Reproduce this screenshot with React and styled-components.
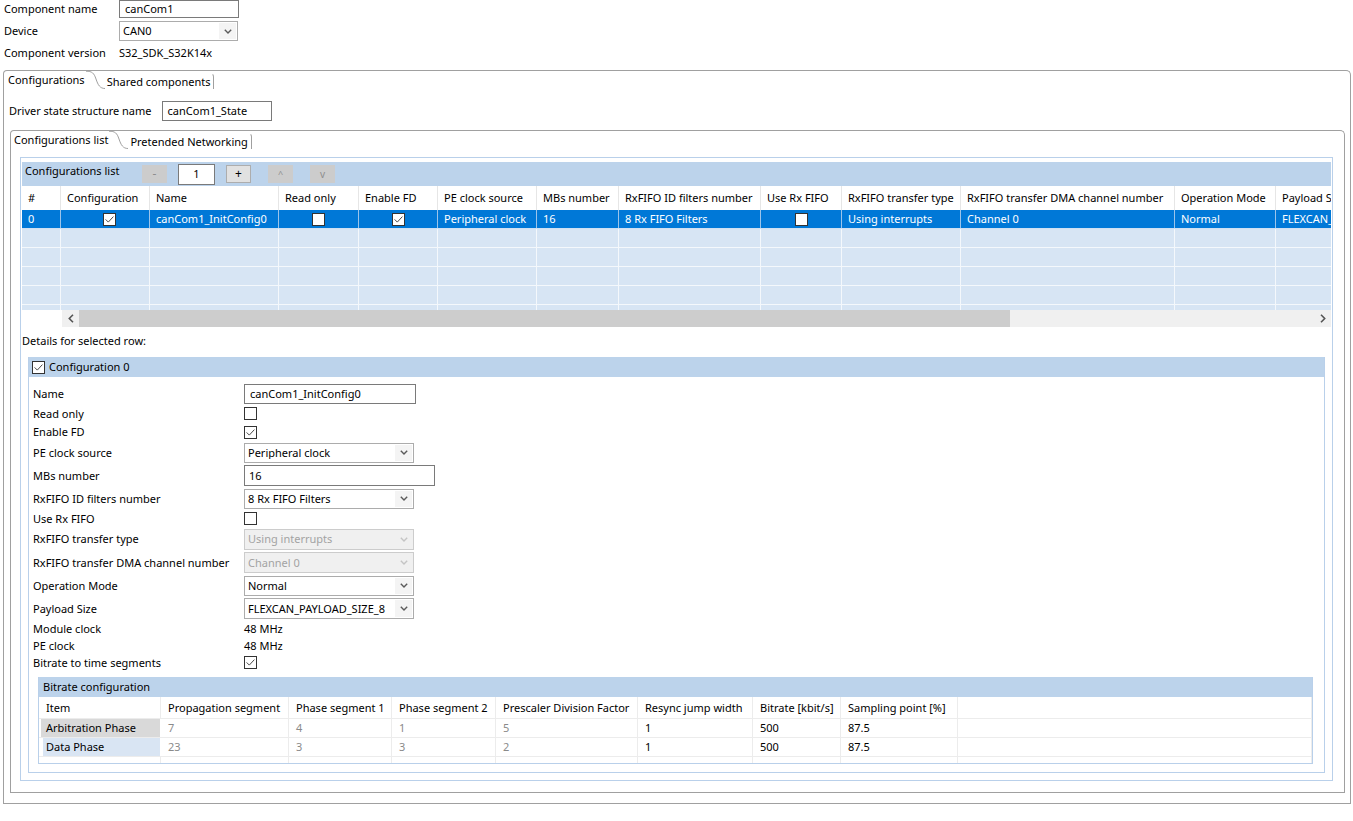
import React from 'react';
import styled, { createGlobalStyle } from 'styled-components';

const GRAY = '#a0a0a0';
const BLUE_LINE = '#b9d0ea';
const BLUE_BAND = '#bcd3eb';
const ROW_BLUE = '#d7e5f4';
const SELECT = '#0078d7';

const GlobalStyle = createGlobalStyle`
  *, *::before, *::after { box-sizing: border-box; }
  html, body { margin: 0; padding: 0; background: #fff; }
  body {
    font-family: "Noto Sans", "Open Sans", sans-serif;
    font-size: 11px;
    line-height: 1.2;
    color: #000;
  }
`;

const Page = styled.div`
  width: 1353px;
  height: 821px;
  overflow: hidden;
`;

/* ---------- top header ---------- */
const TopGrid = styled.div`
  display: grid;
  grid-template-columns: 119px 1fr;
  grid-template-rows: 18px 20px 18px;
  row-gap: 3px;
  align-items: center;
  justify-items: start;
`;

const TopLabel = styled.span`
  padding-left: 4px;
  white-space: nowrap;
`;

const Field = styled.div`
  width: ${p => p.$w}px;
  height: ${p => p.$h || 20}px;
  border: 1px solid #7a7a7a;
  background: #fff;
  display: flex;
  align-items: center;
  justify-content: ${p => (p.$center ? 'center' : 'flex-start')};
  padding-left: ${p => (p.$center ? 0 : p.$pl ?? 5)}px;
  white-space: nowrap;
  overflow: hidden;
`;

const ComboBox = styled.div`
  width: ${p => p.$w}px;
  height: ${p => p.$h || 20}px;
  border: 1px solid ${p => (p.$disabled ? '#cccccc' : '#acacac')};
  background: ${p => (p.$disabled ? '#f0f0f0' : '#fff')};
  color: ${p => (p.$disabled ? '#a3a3a3' : '#000')};
  display: flex;
  align-items: center;
`;

const ComboText = styled.span`
  flex: 1;
  padding-left: ${p => p.$pl ?? 3}px;
  white-space: nowrap;
  overflow: hidden;
`;

const ComboArrow = styled.span`
  width: 17px;
  align-self: stretch;
  margin: 1px;
  display: flex;
  align-items: center;
  justify-content: center;
  background: ${p => (p.$disabled ? '#f0f0f0' : '#f4f4f4')};
`;

const Chevron = ({ color = '#555' }) => (
  <svg width="8" height="5" viewBox="0 0 8 5">
    <path d="M0.8 0.8 L4 4 L7.2 0.8" fill="none" stroke={color} strokeWidth="1.4" />
  </svg>
);

const Combo = ({ w, h, disabled, children, pl }) => (
  <ComboBox $w={w} $h={h} $disabled={disabled}>
    <ComboText $pl={pl}>{children}</ComboText>
    <ComboArrow $disabled={disabled}>
      <Chevron color={disabled ? '#c4c4c4' : '#5a5a5a'} />
    </ComboArrow>
  </ComboBox>
);

const CheckBoxBox = styled.span`
  width: 13px;
  height: 13px;
  flex: none;
  border: 1px solid #333;
  background: #fff;
  display: inline-flex;
  align-items: center;
  justify-content: center;
`;

const Check = ({ checked }) => (
  <CheckBoxBox>
    {checked && (
      <svg width="11" height="11" viewBox="0 0 11 11">
        <path d="M1.6 5.4 L4.3 8.1 L9.4 2.6" fill="none" stroke="#4a4a4a" strokeWidth="1" />
      </svg>
    )}
  </CheckBoxBox>
);

/* ---------- tab folders ---------- */
const Folder = styled.div`
  display: flex;
  flex-direction: column;
  margin: ${p => p.$margin};
`;

const TabStrip = styled.div`
  height: 19px;
  display: flex;
  align-items: stretch;
  border: 1px solid ${GRAY};
  border-bottom: none;
  border-radius: 4px 5px 0 0;
`;

const ActiveTab = styled.div`
  display: flex;
  align-items: center;
  padding-left: ${p => p.$pl}px;
  white-space: nowrap;
`;

const TabCurve = () => (
  <svg width="19" height="18" viewBox="0 0 19 18" style={{ display: 'block', alignSelf: 'flex-start' }}>
    <path d="M0 0.2 C 6 0.2, 8 2, 10 8 C 12 14, 14 17.5, 19 17.5" fill="none" stroke={GRAY} strokeWidth="1" />
  </svg>
);

const TabLabel = styled.span`
  padding-right: 1px;
`;

const OtherTab = styled.div`
  display: flex;
  align-items: center;
  padding: 0 3px 0 2px;
  margin-top: 2px;
  border-right: 1px solid ${GRAY};
  border-top: 1px solid ${GRAY};
  border-top-right-radius: 4px;
  border-top-color: transparent;
  white-space: nowrap;
`;

const FolderBody = styled.div`
  border: 1px solid ${GRAY};
  border-top: none;
  padding: ${p => p.$pad};
`;

/* ---------- driver row ---------- */
const DriverRow = styled.div`
  display: flex;
  align-items: center;
  height: 20px;
  gap: 10px;
  padding-left: 5px;
`;

/* ---------- configurations list ---------- */
const BlueBox = styled.div`
  border: 1px solid ${BLUE_LINE};
  padding: 4px 1px 0 1px;
`;

const ListToolbar = styled.div`
  height: 24px;
  background: ${BLUE_BAND};
  display: flex;
  align-items: center;
  padding-left: 3px;
`;

const ToolbarTitle = styled.span`
  width: 117px;
  white-space: nowrap;
  margin-top: -6px;
`;

const ToolButton = styled.div`
  width: 25px;
  height: 18px;
  margin-right: ${p => p.$mr || 0}px;
  display: flex;
  align-items: center;
  justify-content: center;
  background: ${p => (p.$enabled ? '#e1e1e1' : '#cccccc')};
  border: 1px solid ${p => (p.$enabled ? '#adadad' : '#cccccc')};
  color: ${p => (p.$enabled ? '#000' : '#8e8e8e')};
  font-size: ${p => p.$fs || 11}px;
`;

const CountField = styled(Field)`
  margin-right: 11px;
  height: 21px;
`;

const mainCols = [39, 89, 129, 80, 79, 99, 82, 142, 81, 119, 214, 101, 140];
const mainTemplate = mainCols.map(w => `${w}px`).join(' ');

const TableViewport = styled.div`
  height: 124px;
  overflow: hidden;
`;

const GridRow = styled.div`
  display: grid;
  grid-template-columns: ${mainTemplate};
  height: ${p => p.$h}px;
  background: ${p => p.$bg};
  color: ${p => p.$fg || '#000'};
  border-bottom: ${p => (p.$line ? `1px solid ${p.$line}` : 'none')};
`;

const HeadCell = styled.div`
  display: flex;
  align-items: center;
  padding-left: 6px;
  border-right: 1px solid #e6e6e6;
  white-space: nowrap;
  overflow: hidden;
`;

const BodyCell = styled.div`
  display: flex;
  align-items: center;
  justify-content: ${p => (p.$center ? 'center' : 'flex-start')};
  padding-left: ${p => (p.$center ? p.$shift || 0 : 6)}px;
  border-right: 1px solid ${p => p.$sep};
  white-space: nowrap;
  overflow: hidden;
`;

const ScrollRow = styled.div`
  display: flex;
  height: 17px;
  padding-left: 40px;
`;

const ScrollBar = styled.div`
  flex: 1;
  display: flex;
  background: #f0f0f0;
`;

const ScrollArrow = styled.div`
  width: ${p => p.$w}px;
  display: flex;
  align-items: center;
  justify-content: center;
`;

const ScrollThumb = styled.div`
  width: 931px;
  background: #cdcdcd;
`;

const ScrollGap = styled.div`
  flex: 1;
`;

const DetailsCaption = styled.div`
  height: 17px;
  margin-top: 5px;
  display: flex;
  align-items: center;
  padding-left: 0;
`;

/* ---------- group boxes ---------- */
const Group = styled.div`
  border: 1px solid ${BLUE_LINE};
  border-top: none;
  margin: ${p => p.$margin};
`;

const GroupHeader = styled.div`
  height: ${p => p.$h}px;
  background: ${BLUE_BAND};
  display: flex;
  align-items: center;
  gap: 4px;
  padding-left: ${p => p.$pl}px;
`;

const GroupBody = styled.div`
  padding: ${p => p.$pad};
`;

const DetailRow = styled.div`
  display: grid;
  grid-template-columns: 211px auto;
  height: ${p => p.$h}px;
  align-items: center;
  justify-items: start;
  white-space: nowrap;
`;

/* ---------- bitrate table ---------- */
const brCols = [122, 128, 103, 104, 142, 115, 88, 117];
const brTemplate = brCols.map(w => `${w}px`).join(' ') + ' 1fr';

const BrViewport = styled.div`
  height: 66px;
  overflow: hidden;
`;

const BrRow = styled.div`
  display: grid;
  grid-template-columns: ${brTemplate};
  height: ${p => p.$h}px;
  border-bottom: 1px solid #ececec;
`;

const BrHead = styled.div`
  display: flex;
  align-items: center;
  padding-left: 7px;
  border-right: 1px solid #ececec;
  white-space: nowrap;
`;

const BrCell = styled.div`
  display: flex;
  align-items: center;
  padding-left: 7px;
  border-right: 1px solid #ececec;
  color: ${p => (p.$dim ? '#8a8a8a' : '#000')};
  white-space: nowrap;
`;

const BrItem = styled.div`
  display: flex;
  align-items: center;
  margin-left: ${p => p.$inset}px;
  margin-right: 1px;
  padding-left: ${p => 7 - p.$inset}px;
  background: ${p => p.$bg};
  white-space: nowrap;
`;

/* ---------- data ---------- */
const headers = [
  '#', 'Configuration', 'Name', 'Read only', 'Enable FD', 'PE clock source', 'MBs number',
  'RxFIFO ID filters number', 'Use Rx FIFO', 'RxFIFO transfer type',
  'RxFIFO transfer DMA channel number', 'Operation Mode', 'Payload Size',
];

const selRow = [
  { t: '0' },
  { c: true, shift: 8 },
  { t: 'canCom1_InitConfig0' },
  { c: false },
  { c: true },
  { t: 'Peripheral clock' },
  { t: '16' },
  { t: '8 Rx FIFO Filters' },
  { c: false },
  { t: 'Using interrupts' },
  { t: 'Channel 0' },
  { t: 'Normal' },
  { t: 'FLEXCAN_PAYLOAD_SIZE_8' },
];

const details = [
  { l: 'Name', h: 21, k: 'field', v: 'canCom1_InitConfig0', w: 172, ch: 20 },
  { l: 'Read only', h: 19, k: 'check', v: false },
  { l: 'Enable FD', h: 18, k: 'check', v: true },
  { l: 'PE clock source', h: 23, k: 'combo', v: 'Peripheral clock', w: 170, ch: 20 },
  { l: 'MBs number', h: 23, k: 'field', v: '16', w: 191, ch: 21, pl: 4 },
  { l: 'RxFIFO ID filters number', h: 23, k: 'combo', v: '8 Rx FIFO Filters', w: 170, ch: 20 },
  { l: 'Use Rx FIFO', h: 17, k: 'check', v: false },
  { l: 'RxFIFO transfer type', h: 24, k: 'combo', v: 'Using interrupts', w: 170, ch: 21, dis: true },
  { l: 'RxFIFO transfer DMA channel number', h: 23, k: 'combo', v: 'Channel 0', w: 170, ch: 21, dis: true },
  { l: 'Operation Mode', h: 23, k: 'combo', v: 'Normal', w: 170, ch: 20 },
  { l: 'Payload Size', h: 23, k: 'combo', v: 'FLEXCAN_PAYLOAD_SIZE_8', w: 170, ch: 21 },
  { l: 'Module clock', h: 17, k: 'text', v: '48 MHz' },
  { l: 'PE clock', h: 17, k: 'text', v: '48 MHz' },
  { l: 'Bitrate to time segments', h: 17, k: 'check', v: true },
];

const brHeaders = [
  'Item', 'Propagation segment', 'Phase segment 1', 'Phase segment 2',
  'Prescaler Division Factor', 'Resync jump width', 'Bitrate [kbit/s]', 'Sampling point [%]', '',
];

const brRows = [
  { item: 'Arbitration Phase', bg: '#d9d9d9', inset: 2, vals: ['7', '4', '1', '5', '1', '500', '87.5'] },
  { item: 'Data Phase', bg: '#d9e5f3', inset: 4, vals: ['23', '3', '3', '2', '1', '500', '87.5'] },
];

const renderControl = d => {
  if (d.k === 'field') return <Field $w={d.w} $h={d.ch} $pl={d.pl}>{d.v}</Field>;
  if (d.k === 'check') return <Check checked={d.v} />;
  if (d.k === 'combo') return <Combo w={d.w} h={d.ch} disabled={d.dis}>{d.v}</Combo>;
  return <span>{d.v}</span>;
};

export default function App() {
  return (
    <Page>
      <GlobalStyle />
      <TopGrid>
        <TopLabel>Component name</TopLabel>
        <Field $w={120} $h={18}>canCom1</Field>
        <TopLabel>Device</TopLabel>
        <Combo w={119} h={20} pl={3}>CAN0</Combo>
        <TopLabel>Component version</TopLabel>
        <span>S32_SDK_S32K14x</span>
      </TopGrid>

      <Folder $margin="8px 2px 0 3px">
        <TabStrip>
          <ActiveTab $pl={4}>
            <TabLabel>Configurations</TabLabel>
            <TabCurve />
          </ActiveTab>
          <OtherTab>Shared components</OtherTab>
        </TabStrip>
        <FolderBody $pad="12px 5px 10px 0">
          <DriverRow>
            <span>Driver state structure name</span>
            <Field $w={110} $h={20}>canCom1_State</Field>
          </DriverRow>

          <Folder $margin="9px 0 0 6px">
            <TabStrip>
              <ActiveTab $pl={3}>
                <TabLabel>Configurations list</TabLabel>
                <TabCurve />
              </ActiveTab>
              <OtherTab>Pretended Networking</OtherTab>
            </TabStrip>
            <FolderBody $pad="8px 11px 11px 9px">
              <BlueBox>
                <ListToolbar>
                  <ToolbarTitle>Configurations list</ToolbarTitle>
                  <ToolButton $mr={11} $fs={12}>-</ToolButton>
                  <CountField $w={37} $center>1</CountField>
                  <ToolButton $enabled $mr={17} $fs={12}>+</ToolButton>
                  <ToolButton $mr={17} $fs={9}>^</ToolButton>
                  <ToolButton $fs={10}>v</ToolButton>
                </ListToolbar>

                <TableViewport>
                  <GridRow $h={24} $bg="#fff">
                    {headers.map(h => (
                      <HeadCell key={h}>{h}</HeadCell>
                    ))}
                  </GridRow>
                  <GridRow $h={19} $bg={SELECT} $fg="#fff" $line="#cfe0f3">
                    {selRow.map((c, i) => (
                      <BodyCell key={i} $sep="#9cc4ea" $center={c.c !== undefined} $shift={c.shift}>
                        {c.c !== undefined ? <Check checked={c.c} /> : c.t}
                      </BodyCell>
                    ))}
                  </GridRow>
                  {[0, 1, 2, 3, 4].map(r => (
                    <GridRow key={r} $h={19} $bg={ROW_BLUE} $line="#f4f8fc">
                      {headers.map(h => (
                        <BodyCell key={h} $sep="#f4f8fc" />
                      ))}
                    </GridRow>
                  ))}
                </TableViewport>

                <ScrollRow>
                  <ScrollBar>
                    <ScrollArrow $w={17}>
                      <svg width="6" height="9" viewBox="0 0 6 9">
                        <path d="M5 0.8 L1.3 4.5 L5 8.2" fill="none" stroke="#555" strokeWidth="1.6" />
                      </svg>
                    </ScrollArrow>
                    <ScrollThumb />
                    <ScrollGap />
                    <ScrollArrow $w={17}>
                      <svg width="6" height="9" viewBox="0 0 6 9">
                        <path d="M1 0.8 L4.7 4.5 L1 8.2" fill="none" stroke="#555" strokeWidth="1.6" />
                      </svg>
                    </ScrollArrow>
                  </ScrollBar>
                </ScrollRow>

                <DetailsCaption>Details for selected row:</DetailsCaption>

                <Group $margin="8px 6px 7px 6px">
                  <GroupHeader $h={20} $pl={3}>
                    <Check checked />
                    <span>Configuration 0</span>
                  </GroupHeader>
                  <GroupBody $pad="6px 10px 8px 4px">
                    {details.map(d => (
                      <DetailRow key={d.l} $h={d.h}>
                        <span>{d.l}</span>
                        {renderControl(d)}
                      </DetailRow>
                    ))}

                    <Group $margin="6px 1px 0 5px">
                      <GroupHeader $h={20} $pl={4}>
                        <span>Bitrate configuration</span>
                      </GroupHeader>
                      <BrViewport>
                        <BrRow $h={22}>
                          {brHeaders.map((h, i) => (
                            <BrHead key={i}>{h}</BrHead>
                          ))}
                        </BrRow>
                        {brRows.map(r => (
                          <BrRow key={r.item} $h={19}>
                            <BrItem $bg={r.bg} $inset={r.inset}>{r.item}</BrItem>
                            {r.vals.map((v, i) => (
                              <BrCell key={i} $dim={i < 4}>{v}</BrCell>
                            ))}
                            <BrCell />
                          </BrRow>
                        ))}
                        <BrRow $h={19}>
                          {brHeaders.map((h, i) => (
                            <BrCell key={i} />
                          ))}
                        </BrRow>
                      </BrViewport>
                    </Group>
                  </GroupBody>
                </Group>
              </BlueBox>
            </FolderBody>
          </Folder>
        </FolderBody>
      </Folder>
    </Page>
  );
}
